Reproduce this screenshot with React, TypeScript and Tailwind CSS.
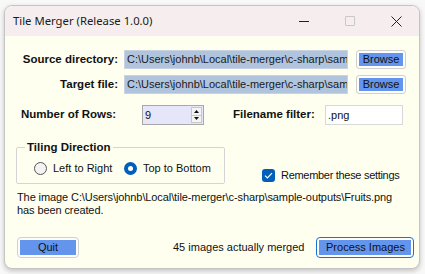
import React from "react";

const F = { fontFamily: '"Liberation Sans", Arial, sans-serif' };

function WinButton({ label, width, focused }: { label: string; width: string; focused?: boolean }) {
  return (
    <div
      className={`${width} h-[21px] rounded-[4px] border ${focused ? "border-[#1574d4]" : "border-[#d0d0d0]"} bg-[#fdfdfd] p-[2px] flex`}
    >
      <div className="flex-1 bg-[#6495ed] flex items-center justify-center text-[11px] text-[#111] leading-none">
        {label}
      </div>
    </div>
  );
}

function BrowseButton() {
  return (
    <div className="w-[50px] h-[19px] rounded-[3px] border border-[#d0d0d0] bg-[#fdfdfd] p-[2px] flex">
      <div className="flex-1 bg-[#6495ed] flex items-center justify-center text-[11px] text-[#111] leading-none">
        Browse
      </div>
    </div>
  );
}

export default function App() {
  const path = "C:\\Users\\johnb\\Local\\tile-merger\\c-sharp\\sample-outputs\\Fruits.png";
  return (
    <div className="w-[425px] h-[274px] bg-[#f8f8f8] pt-[5px] pl-[4px]" style={F}>
      <div className="w-[416px] h-[264px] rounded-[8px] border border-[#c4c4c4] overflow-hidden shadow-[0_2px_5px_rgba(0,0,0,0.22)] flex flex-col bg-[#fffff0]">
        {/* Title bar */}
        <div className="h-[30px] bg-[#f6eeee] flex items-center">
          <div
            className="pl-[8px] text-[11.3px] text-[#1a1a1a] flex-1"
            style={{ fontFamily: '"Noto Sans", "Open Sans", sans-serif' }}
          >
            Tile Merger (Release 1.0.0)
          </div>
          <div className="w-[46px] h-[30px] flex items-center justify-center">
            <div className="w-[10px] h-[1px] bg-[#222]" />
          </div>
          <div className="w-[46px] h-[30px] flex items-center justify-center">
            <div className="w-[10px] h-[10px] border border-[#c8c8c8] rounded-[1px]" />
          </div>
          <div className="w-[46px] h-[30px] flex items-center justify-center">
            <svg width="11" height="11" viewBox="0 0 11 11">
              <path d="M0.5 0.5 L10.5 10.5 M10.5 0.5 L0.5 10.5" stroke="#222" strokeWidth="1" />
            </svg>
          </div>
        </div>

        {/* Body */}
        <div className="flex-1 flex flex-col">
          {/* Row 1 */}
          <div className="mt-[14px] flex items-center h-[19px]">
            <div className="w-[113px] text-right text-[11.5px] font-bold text-[#111]">Source directory:</div>
            <div className="ml-[6px] w-[224px] h-[19px] bg-[#b0c4de] border border-[#c9d3e2] flex items-center pl-[2px] overflow-hidden whitespace-nowrap text-[11px] text-[#1a1a1a]">
              <span className="overflow-hidden">C:\Users\johnb\Local\tile-merger\c-sharp\sam</span>
            </div>
            <div className="ml-[8px]">
              <BrowseButton />
            </div>
          </div>

          {/* Row 2 */}
          <div className="mt-[6px] flex items-center h-[19px]">
            <div className="w-[113px] text-right text-[11.5px] font-bold text-[#111]">Target file:</div>
            <div className="ml-[6px] w-[224px] h-[19px] bg-[#b0c4de] border border-[#c9d3e2] flex items-center pl-[2px] overflow-hidden whitespace-nowrap text-[11px] text-[#1a1a1a]">
              <span className="overflow-hidden">C:\Users\johnb\Local\tile-merger\c-sharp\sam</span>
            </div>
            <div className="ml-[8px]">
              <BrowseButton />
            </div>
          </div>

          {/* Row 3 */}
          <div className="mt-[11px] flex items-center h-[20px]">
            <div className="w-[137px] pl-[16px] text-[11.5px] font-bold text-[#111]">Number of Rows:</div>
            <div className="w-[62px] h-[20px] bg-[#e6e6fa] border border-[#a8a8a8] flex items-center">
              <div className="flex-1 pl-[2px] text-[11px] text-[#111]">9</div>
              <div className="w-[11px] h-[16px] mr-[1px] border border-[#c8c8c8] bg-[#f4f4f4] flex flex-col">
                <div className="flex-1 flex items-center justify-center border-b border-[#c8c8c8]">
                  <svg width="5" height="3" viewBox="0 0 5 3">
                    <path d="M0 3 L2.5 0 L5 3 Z" fill="#111" />
                  </svg>
                </div>
                <div className="flex-1 flex items-center justify-center">
                  <svg width="5" height="3" viewBox="0 0 5 3">
                    <path d="M0 0 L2.5 3 L5 0 Z" fill="#111" />
                  </svg>
                </div>
              </div>
            </div>
            <div className="ml-[29px] w-[92px] text-[11.5px] font-bold text-[#111]">Filename filter:</div>
            <div className="w-[78px] h-[20px] bg-white border border-[#d8d8d8] flex items-center pl-[2px] text-[11px] text-[#111]">
              .png
            </div>
          </div>

          {/* Group + checkbox */}
          <div className="mt-[15px] flex items-end">
            <fieldset className="ml-[11px] w-[209px] h-[44px] border border-[#d4d4d4] rounded-[2px]">
              <legend className="ml-[8px] px-[2px] text-[11.5px] font-bold leading-[14px] text-[#111]">
                Tiling Direction
              </legend>
              <div className="mt-[7px] flex items-center h-[14px]">
                <div className="ml-[17px] w-[90px] flex items-center">
                  <div className="w-[13px] h-[13px] rounded-full border border-[#555] bg-[#f3f3f3]" />
                  <span className="ml-[6px] text-[11px] text-[#111] leading-none">Left to Right</span>
                </div>
                <div className="flex items-center">
                  <div className="w-[13px] h-[13px] rounded-full bg-[#005fb8] flex items-center justify-center">
                    <div className="w-[5px] h-[5px] rounded-full bg-white" />
                  </div>
                  <span className="ml-[6px] text-[11px] text-[#111] leading-none">Top to Bottom</span>
                </div>
              </div>
            </fieldset>
            <div className="ml-[37px] mb-[2px] flex items-center">
              <div className="w-[13px] h-[13px] rounded-[3px] bg-[#005fb8] flex items-center justify-center">
                <svg width="9" height="7" viewBox="0 0 9 7">
                  <path d="M1 3.6 L3.4 6 L8 1.2" stroke="white" strokeWidth="1.2" fill="none" />
                </svg>
              </div>
              <span className="ml-[6px] text-[11px] tracking-[-0.3px] text-[#111] leading-none">
                Remember these settings
              </span>
            </div>
          </div>

          {/* Status */}
          <div className="mt-[7px] pl-[12px] text-[11px] leading-[13px] tracking-[-0.1px] text-[#111]">
            <div>The image {path}</div>
            <div>has been created.</div>
          </div>

          {/* Bottom row */}
          <div className="mt-[20px] flex items-center">
            <div className="ml-[12px]">
              <WinButton label="Quit" width="w-[62px]" />
            </div>
            <div className="ml-[94px] text-[11px] text-[#111]">45 images actually merged</div>
            <div className="ml-[12px]">
              <WinButton label="Process Images" width="w-[98px]" focused />
            </div>
          </div>
        </div>
      </div>
    </div>
  );
}
